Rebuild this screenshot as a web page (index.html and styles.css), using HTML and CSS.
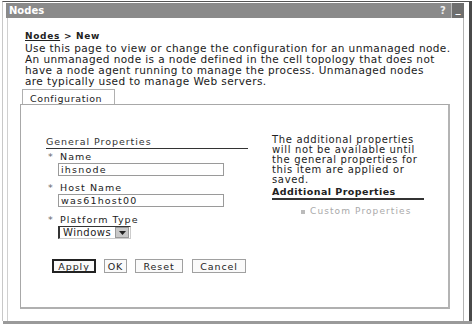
FILE: index.html
```html
<!DOCTYPE html>
<html lang="en">
<head>
    <meta charset="UTF-8">
    <title>Nodes</title>
    <link rel="stylesheet" href="styles.css">
</head>
<body>
    <div class="frame">
        <div class="title-bar">
            <span class="title">Nodes</span>
            <span class="title-help">?</span>
            <span class="title-min">_</span>
        </div>
        <div class="content">
            <div class="breadcrumb"><a href="#">Nodes</a> &gt; New</div>
            <p class="intro">Use this page to view or change the configuration for an unmanaged node.<br>
                An unmanaged node is a node defined in the cell topology that does not<br>
                have a node agent running to manage the process. Unmanaged nodes<br>
                are typically used to manage Web servers.</p>

            <div class="tabs">
                <div class="tab active">Configuration</div>
            </div>
            <div class="tab-panel">
                <div class="form-col">
                    <div class="section-title">General Properties</div>

                    <div class="field">
                        <div class="field-label"><span class="req">*</span>Name</div>
                        <input class="text-input" type="text" value="ihsnode">
                    </div>
                    <div class="field">
                        <div class="field-label"><span class="req">*</span>Host Name</div>
                        <input class="text-input" type="text" value="was61host00">
                    </div>
                    <div class="field">
                        <div class="field-label"><span class="req">*</span>Platform Type</div>
                        <div class="select">
                            <span class="select-value">Windows</span>
                            <span class="select-btn">
                                <svg width="7" height="4" viewBox="0 0 7 4"><path d="M0 0h7L3.5 4z" fill="#222"/></svg>
                            </span>
                        </div>
                    </div>

                    <div class="buttons">
                        <button class="btn default">Apply</button>
                        <button class="btn ok">OK</button>
                        <button class="btn reset">Reset</button>
                        <button class="btn cancel">Cancel</button>
                    </div>
                </div>

                <div class="side-col">
                    <p class="side-note">The additional properties will not be available until the general properties for this item are applied or saved.</p>
                    <div class="side-title">Additional Properties</div>
                    <ul class="side-list">
                        <li>Custom Properties</li>
                    </ul>
                </div>
            </div>
        </div>
    </div>
    <div class="bottom-bar"></div>
</body>
</html>
```

FILE: styles.css
```css
* {
    margin: 0;
    padding: 0;
    box-sizing: border-box;
}

body {
    background-color: #fff;
    font-family: 'DejaVu Sans', Verdana, sans-serif;
    font-size: 10px;
    color: #1c1c1c;
    width: 474px;
    height: 324px;
    overflow: hidden;
}

.frame {
    margin: 1px 2px 0 2px;
    height: 320px;
    border-top: 1px solid #555;
    border-left: 1px solid #c8c8c8;
    border-right: 3px solid #4a4a4a;
}

.title-bar {
    display: flex;
    align-items: center;
    height: 15px;
    margin: 1px 5px 0 3px;
    background-color: #8a8a8a;
    color: #fff;
}

.title {
    flex: 1;
    padding-left: 3px;
    font-weight: bold;
    font-size: 10px;
}

.title-help {
    width: 10px;
    margin-right: 3px;
    font-weight: bold;
    color: #eee;
    text-align: center;
}

.title-min {
    width: 13px;
    height: 15px;
    line-height: 11px;
    background-color: #6e6e6e;
    border-left: 1px solid #bbb;
    text-align: center;
    font-weight: bold;
}

.content {
    height: 304px;
    margin: 0 5px 0 4px;
    padding: 13px 10px 0 17px;
    border-left: 1px solid #d0d0d0;
    border-right: 1px solid #b4b4b4;
}

.breadcrumb {
    font-weight: bold;
    font-size: 9px;
    letter-spacing: 0.7px;
    color: #222;
}

.breadcrumb a {
    color: #222;
}

.intro {
    margin-top: 2px;
    line-height: 11px;
    font-size: 10.5px;
    letter-spacing: 0.41px;
    white-space: nowrap;
    color: #1a1a1a;
}

.tabs {
    display: flex;
    margin-top: 2px;
    margin-left: -3px;
}

.tab {
    width: 93px;
    height: 15px;
    padding: 3px 0 0 7px;
    border: 1px solid #b0b0b0;
    border-bottom: none;
    font-size: 9.5px;
    letter-spacing: 0.6px;
}

.tab-panel {
    display: flex;
    height: 205px;
    margin-left: -5px;
    width: 430px;
    padding: 31px 0 0 25px;
    border: 1px solid #a8a8a8;
    border-right: 2px solid #b4b4b4;
    border-bottom: 2px solid #b0b0b0;
}

.form-col {
    width: 202px;
}

.section-title {
    padding-bottom: 1px;
    border-bottom: 1px solid #333;
    font-size: 9.5px;
    letter-spacing: 0.95px;
    color: #333;
}

.field {
    margin-top: 2px;
}

.field + .field {
    margin-top: 6px;
}

.field + .field + .field {
    margin-top: 7px;
}

.field-label {
    font-size: 9.5px;
    letter-spacing: 1.05px;
    line-height: 12px;
}

.req {
    display: inline-block;
    width: 14px;
    padding-left: 2px;
    color: #666;
}

.text-input {
    display: block;
    width: 166px;
    height: 13px;
    margin-left: 12px;
    padding: 0 2px;
    border: 1px solid #9a9a9a;
    font-family: 'DejaVu Sans', Verdana, sans-serif;
    font-size: 9.5px;
    letter-spacing: 1.2px;
    color: #222;
    background-color: #fff;
}

.select {
    display: flex;
    align-items: center;
    width: 73px;
    height: 13px;
    margin-left: 12px;
    border-top: 1px solid #333;
    border-left: 2px solid #333;
    border-bottom: 1px solid #ccc;
    border-right: 1px solid #ccc;
}

.select-value {
    flex: 1;
    padding-left: 3px;
    font-size: 10px;
    letter-spacing: 0.5px;
}

.select-btn {
    display: flex;
    align-items: center;
    justify-content: center;
    width: 14px;
    height: 11px;
    margin-right: 1px;
    background-color: #c8c8c8;
    border: 1px solid #999;
}

.buttons {
    display: flex;
    gap: 8px;
    margin-top: 20px;
    margin-left: 6px;
}

.btn {
    height: 14px;
    padding: 0;
    border: 1px solid #a0a0a0;
    background-color: #fafafa;
    font-family: 'DejaVu Sans', Verdana, sans-serif;
    font-size: 9.5px;
    letter-spacing: 0.9px;
    color: #222;
}

.btn.default {
    width: 44px;
    border: 2px solid #222;
}

.btn.ok {
    width: 23px;
}

.btn.reset {
    width: 48px;
}

.btn.cancel {
    width: 54px;
    margin-left: 1px;
}

.side-col {
    width: 154px;
    margin-left: 24px;
    margin-top: -1px;
}

.side-note {
    font-size: 10px;
    line-height: 10px;
    letter-spacing: 0.65px;
    color: #222;
}

.side-title {
    margin-top: 1px;
    padding-bottom: 1px;
    width: 152px;
    border-bottom: 2px solid #333;
    font-weight: bold;
    font-size: 9.5px;
    letter-spacing: 0.45px;
    color: #222;
}

.side-list {
    list-style: none;
    margin-top: 6px;
    padding-left: 29px;
}

.side-list li {
    font-size: 9px;
    letter-spacing: 1.1px;
    color: #aaa;
}

.side-list li::before {
    content: "";
    display: inline-block;
    width: 4px;
    height: 4px;
    margin-right: 5px;
    vertical-align: middle;
    background-color: #bbb;
}

.bottom-bar {
    height: 3px;
    margin: 0 2px 0 3px;
    background-color: #9a9a9a;
}
```
